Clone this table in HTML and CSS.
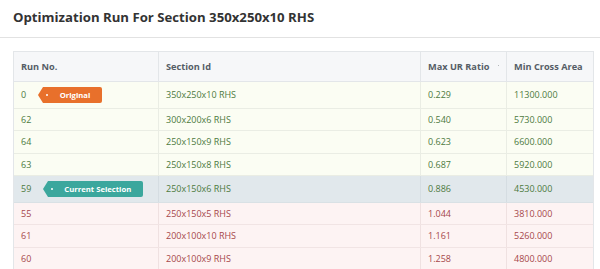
FILE: index.html
```html
<!DOCTYPE html>
<html>
<head>
<meta charset="utf-8">
<link rel="stylesheet" href="styles.css">
</head>
<body>
<div class="page">
  <h1 class="title">Optimization Run For Section 350x250x10 RHS</h1>
  <div class="content">
    <div class="runs">
      <div class="row head">
        <div class="cell">Run No.</div>
        <div class="cell">Section Id</div>
        <div class="cell">Max UR Ratio <span class="sort"></span></div>
        <div class="cell">Min Cross Area</div>
      </div>
      <div class="row ok tall">
        <div class="cell"><span class="run">0</span><span class="badge orange"><i class="dot"></i>Original</span></div>
        <div class="cell">350x250x10 RHS</div><div class="cell">0.229</div><div class="cell">11300.000</div>
      </div>
      <div class="row ok"><div class="cell">62</div><div class="cell">300x200x6 RHS</div><div class="cell">0.540</div><div class="cell">5730.000</div></div>
      <div class="row ok"><div class="cell">64</div><div class="cell">250x150x9 RHS</div><div class="cell">0.623</div><div class="cell">6600.000</div></div>
      <div class="row ok"><div class="cell">63</div><div class="cell">250x150x8 RHS</div><div class="cell">0.687</div><div class="cell">5920.000</div></div>
      <div class="row sel tall">
        <div class="cell"><span class="run">59</span><span class="badge teal"><i class="dot"></i>Current Selection</span></div>
        <div class="cell">250x150x6 RHS</div><div class="cell">0.886</div><div class="cell">4530.000</div>
      </div>
      <div class="row bad"><div class="cell">55</div><div class="cell">250x150x5 RHS</div><div class="cell">1.044</div><div class="cell">3810.000</div></div>
      <div class="row bad"><div class="cell">61</div><div class="cell">200x100x10 RHS</div><div class="cell">1.161</div><div class="cell">5260.000</div></div>
      <div class="row bad"><div class="cell">60</div><div class="cell">200x100x9 RHS</div><div class="cell">1.258</div><div class="cell">4800.000</div></div>
    </div>
  </div>
</div>
</body>
</html>
```
FILE: styles.css
```css
html, body {
  margin: 0;
  padding: 0;
  background: #fff;
  font-family: "Open Sans", "Noto Sans", sans-serif;
}
.page {
  width: 600px;
}
.title {
  margin: 0;
  padding: 7px 13px 0 13px;
  box-sizing: border-box;
  height: 38px;
  font-size: 13.2px;
  line-height: 20px;
  font-weight: 700;
  color: #333;
  border-bottom: 1px solid #e2e2e2;
}
.content {
  padding: 13px 0 0 13px;
}
.runs {
  width: 581px;
  box-sizing: border-box;
  border: 1px solid #e3e6e9;
  border-bottom: 0;
  font-size: 9px;
}
.row {
  display: grid;
  grid-template-columns: 145px 262px 86px 86px;
  height: 22.5px;
  box-sizing: border-box;
  border-bottom: 1px solid #eaede4;
}
.row.tall { height: 26.5px; }
.row.head {
  height: 30px;
  background: #f6f7f9;
  color: #555d66;
  font-weight: 700;
  font-size: 9.2px;
  border-bottom-color: #e3e6e9;
}
.cell {
  display: flex;
  align-items: center;
  padding: 0 7px;
  box-sizing: border-box;
  white-space: nowrap;
  overflow: hidden;
  border-right: 1px solid #e6e9e3;
}
.cell:last-child { border-right: 0; }
.head .cell { border-right-color: #e3e6e9; }
.ok { background: #fbfdf3; color: #4d7a3e; }
.ok .cell { border-right-color: #eaede4; }
.sel { background: #e1e8ec; color: #4d7a3e; border-bottom-color: #d9e1e5; }
.sel .cell { border-right-color: #d5dde2; }
.bad { background: #fdf3f3; color: #a6474a; border-bottom-color: #f1e4e4; }
.bad .cell { border-right-color: #efe1e1; }
.sort {
  display: inline-block;
  width: 4px;
  height: 1px;
  background: #b5b8bb;
  margin-left: 9px;
  margin-top: -3px;
}
.badge {
  display: inline-flex;
  align-items: center;
  position: relative;
  height: 16px;
  color: #fff;
  font-weight: 700;
  font-size: 7.7px;
  padding: 0 12px 0 2.5px;
  margin-left: 17px;
  border-radius: 0 2px 2px 0;
}
.badge::before {
  content: "";
  position: absolute;
  left: -5px;
  top: 0;
  border-style: solid;
  border-width: 8px 5px 8px 0;
}
.badge .dot {
  display: inline-block;
  width: 2.5px;
  height: 2.5px;
  border-radius: 50%;
  background: #fff;
  margin-right: 11.5px;
}
.orange { background: #e8702b; }
.orange::before { border-color: transparent #e8702b transparent transparent; }
.teal { background: #3ba79d; padding-right: 11.5px; }
.teal .dot { margin-right: 11px; }
.teal::before { border-color: transparent #3ba79d transparent transparent; }
```
